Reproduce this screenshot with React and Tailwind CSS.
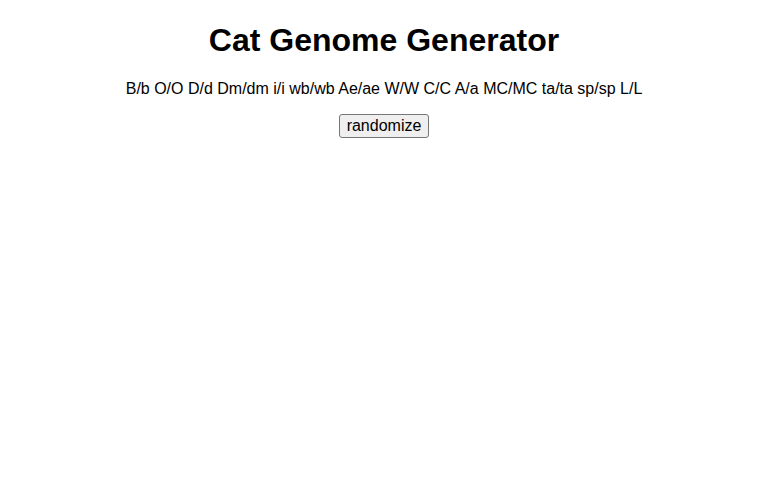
export default function App() {
  const genome = 'B/b O/O D/d Dm/dm i/i wb/wb Ae/ae W/W C/C A/a MC/MC ta/ta sp/sp L/L';

  return (
    <div className="min-h-screen bg-white text-black text-center px-2 pt-px font-['Liberation_Sans',Arial,sans-serif]">
      <h1 className="mt-[20.5px] mb-[21.44px] text-[32px] font-bold leading-[normal]">Cat Genome Generator</h1>
      <p className="mt-4 mb-[16.5px] text-base leading-[normal]">{genome}</p>
      <button className="border border-[#767676] bg-[#efefef] rounded-[3px] px-[7px] py-[2px] text-base leading-[normal] text-black">
        randomize
      </button>
    </div>
  );
}
